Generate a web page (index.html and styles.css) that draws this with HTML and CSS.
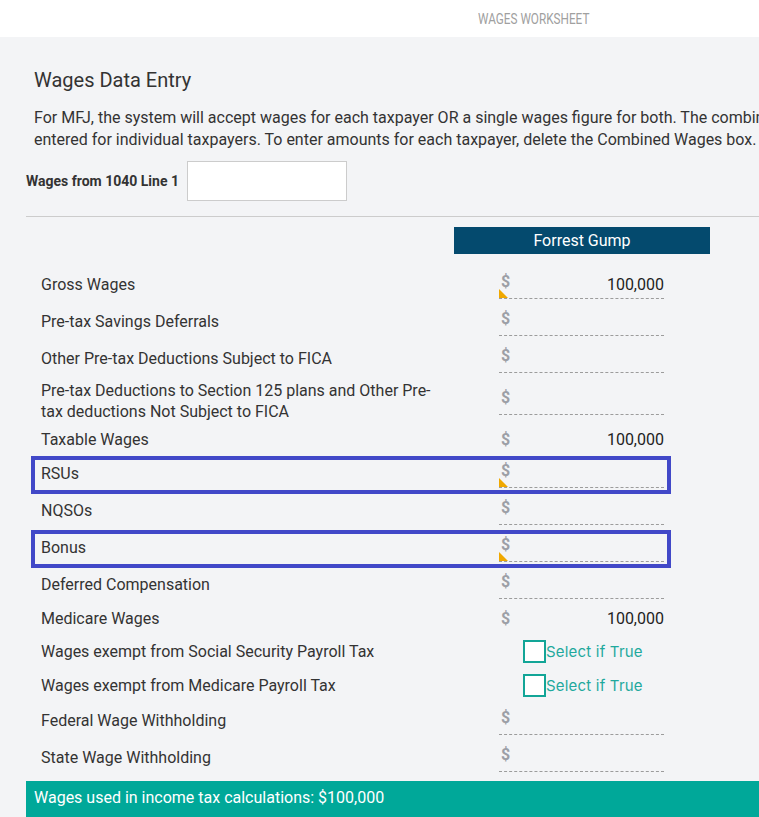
FILE: index.html
```
<!DOCTYPE html>
<html lang="en">

<head>
    <title>Wages Worksheet</title>
    <meta charset="utf-8" />
    <link rel="stylesheet" href="styles.css">
</head>
<body>

    <div id="topBar">
        <span id="topTitle">WAGES WORKSHEET</span>
    </div>

    <div id="sheet">
        <h1 class="sheetTitle">Wages Data Entry</h1>
        <p class="sheetNote">For MFJ, the system will accept wages for each taxpayer OR a single wages figure for both. The combined wages figure will be ignored if wages are<br>entered for individual taxpayers. To enter amounts for each taxpayer, delete the Combined Wages box.</p>

        <div class="totalField">
            <label class="totalLabel">Wages from 1040 Line 1</label>
            <div class="totalInput"></div>
        </div>

        <div class="divider"></div>

        <div class="gridHead">
            <div class="personHead">Forrest Gump</div>
        </div>

        <div class="rows">
            <div class="row">
                <div class="rowLabel">Gross Wages</div>
                <div class="cell flagged"><span class="cur">$</span><span class="amt">100,000</span></div>
            </div>
            <div class="row">
                <div class="rowLabel">Pre-tax Savings Deferrals</div>
                <div class="cell"><span class="cur">$</span></div>
            </div>
            <div class="row">
                <div class="rowLabel">Other Pre-tax Deductions Subject to FICA</div>
                <div class="cell"><span class="cur">$</span></div>
            </div>
            <div class="row tall">
                <div class="rowLabel">Pre-tax Deductions to Section 125 plans and Other Pre-tax deductions Not Subject to FICA</div>
                <div class="cell"><span class="cur">$</span></div>
            </div>
            <div class="row short">
                <div class="rowLabel">Taxable Wages</div>
                <div class="cell readonly"><span class="cur">$</span><span class="amt">100,000</span></div>
            </div>
            <div class="row marked">
                <div class="rowLabel">RSUs</div>
                <div class="cell flagged"><span class="cur">$</span></div>
            </div>
            <div class="row">
                <div class="rowLabel">NQSOs</div>
                <div class="cell"><span class="cur">$</span></div>
            </div>
            <div class="row marked">
                <div class="rowLabel">Bonus</div>
                <div class="cell flagged"><span class="cur">$</span></div>
            </div>
            <div class="row">
                <div class="rowLabel">Deferred Compensation</div>
                <div class="cell"><span class="cur">$</span></div>
            </div>
            <div class="row short">
                <div class="rowLabel">Medicare Wages</div>
                <div class="cell readonly"><span class="cur">$</span><span class="amt">100,000</span></div>
            </div>
            <div class="row check">
                <div class="rowLabel">Wages exempt from Social Security Payroll Tax</div>
                <label class="checkCell"><span class="checkBox"></span>Select if True</label>
            </div>
            <div class="row check">
                <div class="rowLabel">Wages exempt from Medicare Payroll Tax</div>
                <label class="checkCell"><span class="checkBox"></span>Select if True</label>
            </div>
            <div class="row">
                <div class="rowLabel">Federal Wage Withholding</div>
                <div class="cell"><span class="cur">$</span></div>
            </div>
            <div class="row">
                <div class="rowLabel">State Wage Withholding</div>
                <div class="cell"><span class="cur">$</span></div>
            </div>
        </div>

        <div class="summary">Wages used in income tax calculations: $100,000</div>
    </div>

</body>
</html>
```

FILE: styles.css
```
body {
    margin: 0;
    background-color: #F3F4F6;
    font-family: Roboto, 'Liberation Sans', sans-serif;
    font-size: 16px;
    color: #333333;
    overflow: hidden;
}

#topBar {
    height: 37px;
    background-color: #FFFFFF;
    box-sizing: border-box;
    padding: 9px 0px 0px 478px;
}

/* narrow caps, like a condensed face */
#topTitle {
    display: inline-block;
    font-size: 14px;
    line-height: 16px;
    color: #A0A0A0;
    transform: scaleX(0.84);
    transform-origin: left center;
}

#sheet {
    width: 1000px;
    padding-left: 26px;
}

.sheetTitle {
    margin: 29px 0px 0px 0px;
    padding-left: 8px;
    font-size: 20px;
    line-height: 28px;
    font-weight: normal;
    color: #333333;
}

.sheetNote {
    margin: 13px 0px 0px 0px;
    padding-left: 8px;
    line-height: 22px;
    white-space: nowrap;
}

.totalField {
    display: flex;
    align-items: center;
    gap: 8px;
    margin-top: 10px;
}

.totalLabel {
    font-size: 14px;
    font-weight: bold;
    color: #333333;
}

.totalInput {
    width: 160px;
    height: 40px;
    box-sizing: border-box;
    background-color: #FFFFFF;
    border: 1px solid #CCCCCC;
}

.divider {
    height: 1px;
    margin-top: 15px;
    background-color: #CCCCCC;
}

.gridHead {
    margin-top: 10px;
    padding-left: 428px;
}

.personHead {
    width: 256px;
    height: 27px;
    line-height: 27px;
    text-align: center;
    font-size: 16px;
    color: #FFFFFF;
    background-color: #044A6E;
}

.rows {
    margin-top: 12px;
}

.row {
    position: relative;
    display: flex;
    align-items: center;
    height: 37px;
    padding-left: 15px;
}

.row.tall {
    height: 47px;
}

.row.short {
    height: 31px;
}

.row.check {
    height: 34px;
}

/* blue call-out frame drawn over the row */
.row.marked::after {
    content: '';
    position: absolute;
    left: 5px;
    top: 1px;
    width: 640px;
    height: 38px;
    box-sizing: border-box;
    border: 4px solid #4148C8;
}

.rowLabel {
    width: 398px;
    padding-right: 15px;
    line-height: 21px;
}

.cell {
    position: relative;
    display: flex;
    justify-content: space-between;
    align-items: flex-start;
    width: 165px;
    height: 28px;
    margin-left: 45px;
    box-sizing: border-box;
    border-bottom: 1px dashed #9C9C9C;
}

.cell.readonly {
    height: auto;
    align-items: center;
    border-bottom: none;
}

.cur {
    padding-left: 2px;
    line-height: 22px;
    font-weight: bold;
    color: #9C9FA6;
}

.amt {
    padding-top: 3px;
    line-height: 22px;
    color: #1E1E1E;
}

.cell.readonly .amt {
    padding-top: 0px;
}

/* orange marker in the lower left corner */
.cell.flagged::after {
    content: '';
    position: absolute;
    left: 0px;
    bottom: 0px;
    width: 0px;
    height: 0px;
    border-bottom: 9px solid #F0A800;
    border-right: 9px solid transparent;
}

.checkCell {
    display: flex;
    align-items: center;
    margin-left: 69px;
    font-family: Inter, 'Open Sans', sans-serif;
    font-size: 15px;
    letter-spacing: 0.2px;
    color: #1FA99D;
}

.checkBox {
    width: 23px;
    height: 23px;
    box-sizing: border-box;
    background-color: #FFFFFF;
    border: 2px solid #12A597;
}

.summary {
    margin-top: 5px;
    height: 36px;
    line-height: 34px;
    padding-left: 8px;
    background-color: #00A899;
    color: #FFFFFF;
}
```
